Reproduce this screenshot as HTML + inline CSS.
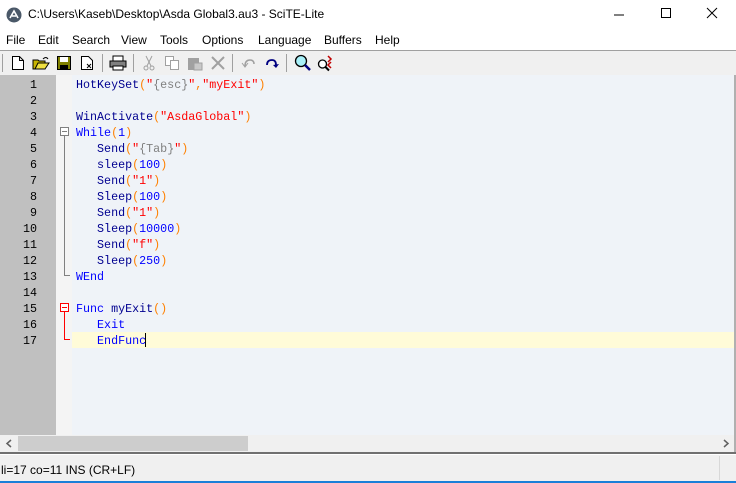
<!DOCTYPE html>
<html><head><meta charset="utf-8"><style>
*{margin:0;padding:0;box-sizing:border-box}
body{width:736px;height:483px;background:#fff;position:relative;overflow:hidden;font-family:"Liberation Sans",sans-serif;font-size:12px;color:#000}
.abs{position:absolute}
#title{left:0;top:0;width:736px;height:30px;background:#fff}
#title .t{left:28px;top:7px;font-size:12px}
#menu{top:30px;left:0;width:736px;height:20px;background:#fff}
#menu span{position:absolute;top:3px;font-size:12px}
#tb{top:50px;left:0;width:736px;height:25px;background:#f0f0f0;border-top:1px solid #a0a0a0}
.sep{position:absolute;top:3px;width:1px;height:18px;background:#a0a0a0}
#gut{left:0;top:75px;width:56px;height:360px;background:#c0c0c0}
#fold{left:56px;top:75px;width:16px;height:360px;background:#f4f4f4}
#ed{left:72px;top:75px;width:662px;height:360px;background:#eff3f8}
#cl{left:72px;top:332px;width:662px;height:16px;background:#fffbd8}
.ln{position:absolute;left:0;width:37px;text-align:right;font-family:"Liberation Mono",monospace;font-size:11.7px;color:#000;line-height:16px;margin-top:1px}
.code{position:absolute;left:76px;font-family:"Liberation Mono",monospace;font-size:11.7px;line-height:16px;white-space:pre;margin-top:1px}
.f{color:#000090}.k{color:#0000ff}.p{color:#ff8000}.s{color:#ff0000}.g{color:#808080}.n{color:#0000ff}
#hs{left:0;top:435px;width:734px;height:17px;background:#f0f0f0}
#rb{left:734px;top:75px;width:2px;height:378px;background:#b0b0b0}
#sb{left:0;top:455px;width:736px;height:26px;background:#f0f0f0}
</style></head><body>
<div id="title" class="abs">
<svg class="abs" style="left:6px;top:7px" width="16" height="16"><circle cx="8" cy="8" r="7.5" fill="#4a5868"/><path d="M4 11 L8 4 L12 11 M6 9 H10" stroke="#fff" stroke-width="1.6" fill="none"/></svg>
<span class="abs t">C:\Users\Kaseb\Desktop\Asda Global3.au3 - SciTE-Lite</span>
<svg class="abs" style="left:612px;top:8px" width="14" height="14"><path d="M2 7 H12" stroke="#000"/></svg>
<svg class="abs" style="left:660px;top:7px" width="12" height="12"><rect x="1.5" y="1.5" width="9" height="9" stroke="#000" fill="none"/></svg>
<svg class="abs" style="left:706px;top:7px" width="12" height="12"><path d="M1 1 L11 11 M11 1 L1 11" stroke="#000"/></svg>
</div>
<div id="menu" class="abs">
<span style="left:6px">File</span><span style="left:38px">Edit</span><span style="left:72px">Search</span><span style="left:121px">View</span><span style="left:160px">Tools</span><span style="left:202px">Options</span><span style="left:258px">Language</span><span style="left:324px">Buffers</span><span style="left:375px">Help</span>
</div>
<div id="tb" class="abs">
<div class="sep" style="left:2px"></div>
<svg class="abs" style="left:11px;top:4px" width="14" height="16"><path d="M1.5 1.5 H8.5 L12.5 5.5 V14.5 H1.5Z M8.5 1.5 V5.5 H12.5" stroke="#000" fill="#fff"/></svg>
<svg class="abs" style="left:32px;top:4px" width="18" height="16"><path d="M1 5 H6 L7 6 H13 V14 H1Z" fill="#c8b400" stroke="#000"/><path d="M3 14 L6 8 H17 L13 14Z" fill="#f0e040" stroke="#000"/><path d="M11 4 Q14 1 16 4" stroke="#000" fill="none"/></svg>
<svg class="abs" style="left:56px;top:4px" width="16" height="16"><rect x="1.5" y="1.5" width="13" height="13" fill="#808000" stroke="#000"/><rect x="4" y="2" width="8" height="5" fill="#fff"/><rect x="4" y="10" width="8" height="4" fill="#000"/></svg>
<svg class="abs" style="left:80px;top:4px" width="16" height="16"><path d="M1.5 1.5 H8.5 L12.5 5.5 V14.5 H1.5Z" stroke="#000" fill="#fff"/><path d="M7 9 L11 13 M11 9 L7 13" stroke="#000"/></svg>
<div class="sep" style="left:102px"></div>
<svg class="abs" style="left:109px;top:4px" width="18" height="16"><rect x="4" y="1" width="10" height="5" fill="#fff" stroke="#000"/><rect x="1" y="6" width="16" height="6" fill="#808080" stroke="#000"/><rect x="4" y="11" width="10" height="4" fill="#fff" stroke="#000"/></svg>
<div class="sep" style="left:133px"></div>
<svg class="abs" style="left:142px;top:4px" width="14" height="16"><path d="M4 1 L9 11 M10 1 L5 11" stroke="#a0a0a0"/><circle cx="4" cy="13" r="2" stroke="#a0a0a0" fill="none"/><circle cx="10" cy="13" r="2" stroke="#a0a0a0" fill="none"/></svg>
<svg class="abs" style="left:164px;top:4px" width="16" height="16"><rect x="1.5" y="1.5" width="8" height="9" stroke="#a0a0a0" fill="#fff"/><rect x="6.5" y="5.5" width="8" height="9" stroke="#a0a0a0" fill="#fff"/></svg>
<svg class="abs" style="left:187px;top:4px" width="16" height="16"><rect x="1" y="3" width="11" height="12" fill="#a0a0a0"/><rect x="7" y="8" width="8" height="7" fill="#c8c8c8" stroke="#a0a0a0"/></svg>
<svg class="abs" style="left:210px;top:4px" width="16" height="16"><path d="M2 2 L14 14 M14 2 L2 14" stroke="#a0a0a0" stroke-width="2"/></svg>
<div class="sep" style="left:232px"></div>
<svg class="abs" style="left:241px;top:5px" width="16" height="14"><path d="M4 10 Q4 4 9 4 Q13 4 13 8" stroke="#a0a0a0" stroke-width="1.5" fill="none"/><path d="M1 7 L4 11 L7 7" stroke="#a0a0a0" fill="none"/></svg>
<svg class="abs" style="left:264px;top:5px" width="16" height="14"><path d="M3 9 Q3 4 8 4 Q12 4 12 9" stroke="#000080" stroke-width="1.8" fill="none"/><path d="M9 9 L12 12 L15 8Z" fill="#000080"/></svg>
<div class="sep" style="left:286px"></div>
<svg class="abs" style="left:294px;top:3px" width="18" height="18"><circle cx="7" cy="7" r="5.5" fill="#a8f0f8" stroke="#000" stroke-width="1.3"/><path d="M11 11 L16 16" stroke="#000080" stroke-width="2.5"/></svg>
<svg class="abs" style="left:317px;top:3px" width="18" height="18"><circle cx="5.5" cy="10" r="4" fill="#fff" stroke="#000" stroke-width="1.3"/><path d="M8.5 13 L12 16.5" stroke="#000" stroke-width="2"/><path d="M11 2 L14 5 L11 8 M14 8 L11 11 L14 14" stroke="#c00000" stroke-width="1.5" fill="none"/></svg>
</div>
<div id="gut" class="abs"></div>
<div id="fold" class="abs"></div>
<div id="ed" class="abs"></div>
<div id="cl" class="abs"></div>
<div id="rb" class="abs"></div>
<div class="abs" style="left:0;top:76px;width:56px">
<div class="ln">1</div><div class="ln" style="top:16px">2</div><div class="ln" style="top:32px">3</div><div class="ln" style="top:48px">4</div><div class="ln" style="top:64px">5</div><div class="ln" style="top:80px">6</div><div class="ln" style="top:96px">7</div><div class="ln" style="top:112px">8</div><div class="ln" style="top:128px">9</div><div class="ln" style="top:144px">10</div><div class="ln" style="top:160px">11</div><div class="ln" style="top:176px">12</div><div class="ln" style="top:192px">13</div><div class="ln" style="top:208px">14</div><div class="ln" style="top:224px">15</div><div class="ln" style="top:240px">16</div><div class="ln" style="top:256px">17</div>
</div>
<svg class="abs" style="left:56px;top:75px" width="16" height="360">
<rect x="4.5" y="52.5" width="8" height="8" fill="#fff" stroke="#808080"/><path d="M6 56.5 H11" stroke="#808080"/>
<path d="M8.5 61 V200.5 H14" stroke="#808080" fill="none"/>
<rect x="4.5" y="228.5" width="8" height="8" fill="#fff" stroke="#ff0000"/><path d="M6 232.5 H11" stroke="#ff0000"/>
<path d="M8.5 237 V264.5 H14" stroke="#ff0000" fill="none"/>
</svg>
<div class="code" style="top:76px"><span class="f">HotKeySet</span><span class="p">(</span><span class="s">"</span><span class="g">{esc}</span><span class="s">"</span><span class="p">,</span><span class="s">"myExit"</span><span class="p">)</span></div>
<div class="code" style="top:108px"><span class="f">WinActivate</span><span class="p">(</span><span class="s">"AsdaGlobal"</span><span class="p">)</span></div>
<div class="code" style="top:124px"><span class="k">While</span><span class="p">(</span><span class="n">1</span><span class="p">)</span></div>
<div class="code" style="top:140px">   <span class="f">Send</span><span class="p">(</span><span class="s">"</span><span class="g">{Tab}</span><span class="s">"</span><span class="p">)</span></div>
<div class="code" style="top:156px">   <span class="f">sleep</span><span class="p">(</span><span class="n">100</span><span class="p">)</span></div>
<div class="code" style="top:172px">   <span class="f">Send</span><span class="p">(</span><span class="s">"1"</span><span class="p">)</span></div>
<div class="code" style="top:188px">   <span class="f">Sleep</span><span class="p">(</span><span class="n">100</span><span class="p">)</span></div>
<div class="code" style="top:204px">   <span class="f">Send</span><span class="p">(</span><span class="s">"1"</span><span class="p">)</span></div>
<div class="code" style="top:220px">   <span class="f">Sleep</span><span class="p">(</span><span class="n">10000</span><span class="p">)</span></div>
<div class="code" style="top:236px">   <span class="f">Send</span><span class="p">(</span><span class="s">"f"</span><span class="p">)</span></div>
<div class="code" style="top:252px">   <span class="f">Sleep</span><span class="p">(</span><span class="n">250</span><span class="p">)</span></div>
<div class="code" style="top:268px"><span class="k">WEnd</span></div>
<div class="code" style="top:300px"><span class="k">Func</span> <span class="f">myExit</span><span class="p">()</span></div>
<div class="code" style="top:316px">   <span class="k">Exit</span></div>
<div class="code" style="top:332px">   <span class="k">EndFunc</span></div>
<div class="abs" style="left:145px;top:333px;width:1px;height:14px;background:#000"></div>
<div id="hs" class="abs">
<svg class="abs" style="left:5px;top:4px" width="8" height="9"><path d="M6 1 L2 4.5 L6 8" stroke="#606060" stroke-width="1.5" fill="none"/></svg>
<div class="abs" style="left:18px;top:1px;width:230px;height:15px;background:#cdcdcd"></div>
<svg class="abs" style="left:722px;top:4px" width="8" height="9"><path d="M2 1 L6 4.5 L2 8" stroke="#606060" stroke-width="1.5" fill="none"/></svg>
</div>
<div class="abs" style="left:0;top:452px;width:736px;height:2px;background:#707070"></div>
<div id="sb" class="abs"><span class="abs" style="left:1px;top:8px;font-size:12px">li=17 co=11 INS (CR+LF)</span>
<div class="abs" style="left:719px;top:1px;width:1px;height:24px;background:#d8d8d8"></div></div>
<div class="abs" style="left:0;top:481px;width:736px;height:2px;background:#1a7fd8"></div>
</body></html>
